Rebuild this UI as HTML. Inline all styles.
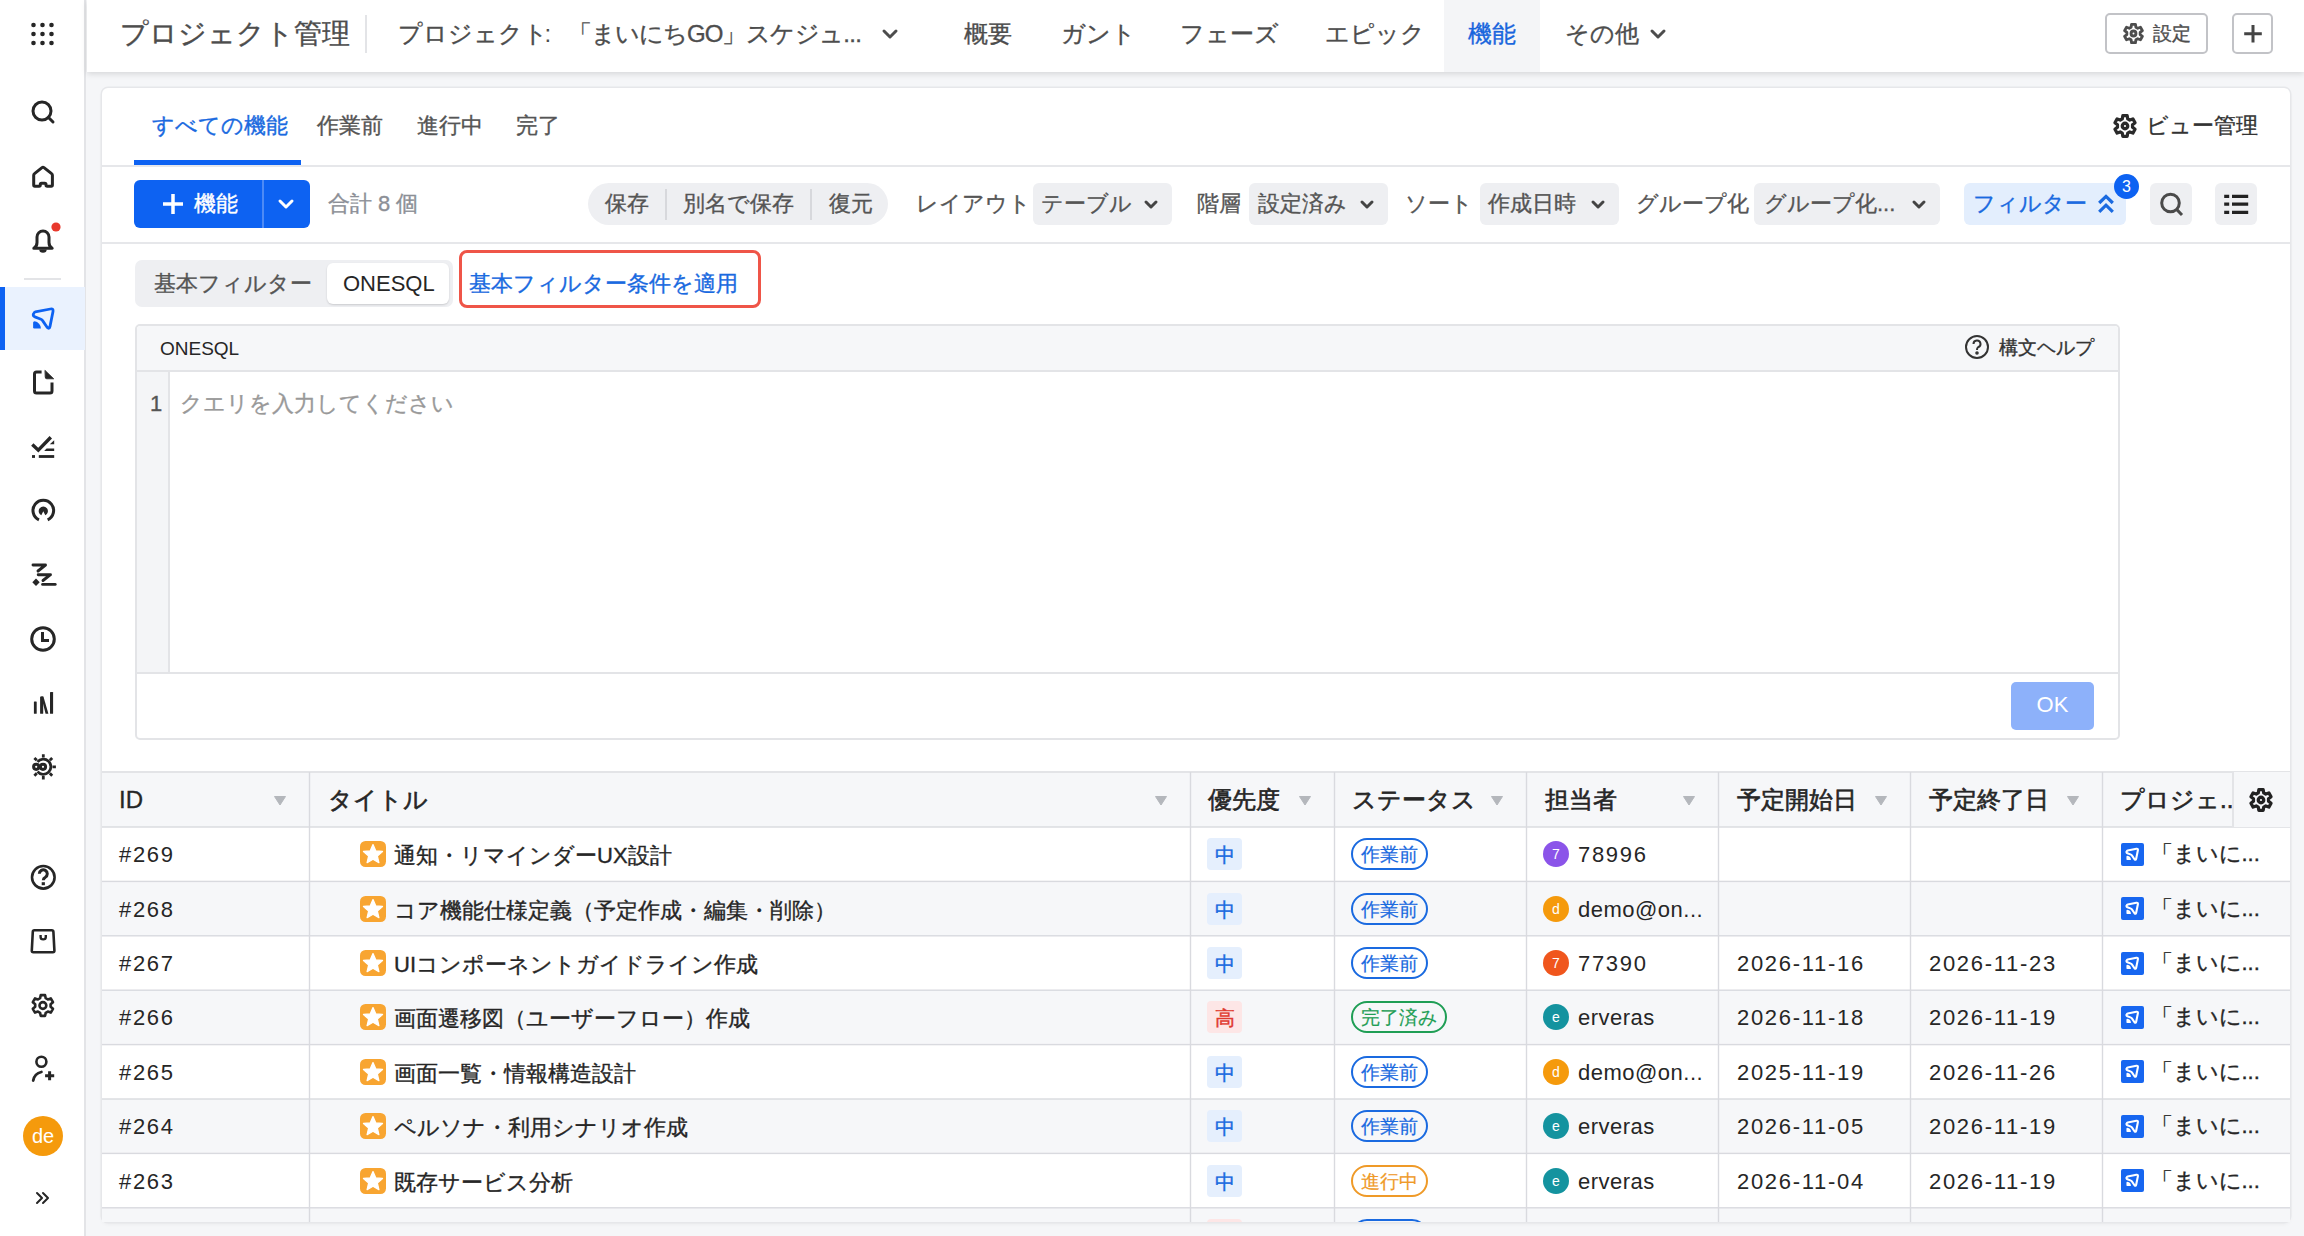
<!DOCTYPE html>
<html lang="ja">
<head>
<meta charset="utf-8">
<style>
*{box-sizing:border-box;margin:0;padding:0}
html,body{width:2304px;height:1236px;overflow:hidden}
body{-webkit-text-stroke:0.35px currentColor;font-family:"Liberation Sans",sans-serif;background:#f5f6f8;color:#262626;position:relative}
.a{position:absolute}
.t{position:absolute;white-space:nowrap;line-height:1}
.sel{position:absolute;top:183px;height:42px;background:#eeeff2;border-radius:6px}
svg{position:absolute;overflow:visible}
.th{font-size:24px;color:#262626;-webkit-text-stroke:0.6px #262626}
.td{font-size:22px;color:#262626}
.num{letter-spacing:1.7px}
.lat{-webkit-text-stroke:0}
.nm{letter-spacing:0.5px}
.star{width:26px;height:26px;background:#f8a531;border-radius:5px}
.pri{-webkit-text-stroke:0.4px currentColor;width:35px;height:32px;border-radius:4px;font-size:20px;line-height:34px;text-align:center}
.pill{-webkit-text-stroke:0.2px currentColor;height:32px;border:2px solid;border-radius:16px;font-size:19px;line-height:30px;text-align:center;background:transparent}
.av{-webkit-text-stroke:0;width:26px;height:26px;border-radius:50%;color:#fff;font-size:14px;line-height:26px;text-align:center}

</style>
</head>
<body>
<svg width="0" height="0" style="left:0;top:0;position:absolute">
<defs>
<symbol id="gear" viewBox="0 0 26 26"><path d="M15.72 5.90L15.20 2.63L10.80 2.63L10.28 5.90L8.22 7.09L5.12 5.91L2.92 9.72L5.49 11.81L5.49 14.19L2.92 16.28L5.12 20.09L8.22 18.91L10.28 20.10L10.80 23.37L15.20 23.37L15.72 20.10L17.78 18.91L20.88 20.09L23.08 16.28L20.51 14.19L20.51 11.81L23.08 9.72L20.88 5.91L17.78 7.09Z" fill="none" stroke="currentColor" stroke-width="3.2" stroke-linejoin="round"/><path d="M13 8.6A4.4 4.4 0 1 1 13 17.4A4.4 4.4 0 1 1 13 8.6ZM13 11.9A1.1 1.1 0 1 0 13 14.1A1.1 1.1 0 1 0 13 11.9Z" fill="currentColor" fill-rule="evenodd"/></symbol>
<symbol id="plane" viewBox="31 306 26 26" overflow="visible"><path d="M35.3 311.9L50.4 309.0Q53.6 308.4 53.0 311.6L50.0 326.4Q49.3 329.6 47.1 327.2L42.6 320.6Q42 319.6 40.9 319.2L34.9 316.9Q32.5 316 33.5 313.9Q34.2 312.1 35.3 311.9Z" fill="none" stroke="currentColor" style="stroke-width:var(--sw,2.8)" stroke-linejoin="round"/><path d="M33.1 322.8Q33.1 321.3 34.6 321.3A7.2 7.2 0 0 1 40.9 328.4H34.3Q33.1 328.4 33.1 327.2Z" fill="currentColor"/></symbol>
</defs></svg>

<!-- ============ SIDEBAR ============ -->
<div class="a" style="left:0;top:0;width:86px;height:1236px;background:#fff;border-right:2px solid #e3e4e7"></div>
<div class="a" style="left:0;top:287px;width:85px;height:63px;background:#eaf2fe"></div>
<div class="a" style="left:0;top:287px;width:5px;height:63px;background:#0d62f2"></div>
<div class="a" style="left:24px;top:278px;width:37px;height:2px;background:#e3e4e7"></div>
<svg width="86" height="1236" style="left:0;top:0" fill="none" stroke="#262626" stroke-width="3" stroke-linecap="round" stroke-linejoin="round">
  <!-- grid dots -->
  <g fill="#262626" stroke="none">
    <circle cx="33.5" cy="25" r="2.3"/><circle cx="42.5" cy="25" r="2.3"/><circle cx="51.5" cy="25" r="2.3"/>
    <circle cx="33.5" cy="34" r="2.3"/><circle cx="42.5" cy="34" r="2.3"/><circle cx="51.5" cy="34" r="2.3"/>
    <circle cx="33.5" cy="43" r="2.3"/><circle cx="42.5" cy="43" r="2.3"/><circle cx="51.5" cy="43" r="2.3"/>
  </g>
  <!-- search -->
  <circle cx="42" cy="111" r="9"/><line x1="48.5" y1="117.5" x2="53" y2="122"/>
  <!-- home -->
  <path d="M33.7 185V175.2Q33.7 174.2 34.5 173.6L42 167.6Q43 166.8 44 167.6L51.6 173.6Q52.4 174.2 52.4 175.2V185Q52.4 186.2 51.2 186.2H47.2Q46 186.2 46 185V184.4Q46 183.2 44.8 183.2H41.5Q40.3 183.2 40.3 184.4V185Q40.3 186.2 39.1 186.2H34.9Q33.7 186.2 33.7 185Z" stroke-width="3"/>
  <!-- bell -->
  <path d="M33.8 248.3Q37 246.5 37 242.5V237A6 6 0 0 1 49 237V242.5Q49 246.5 52.2 248.3Z" stroke-width="3"/><path d="M39.3 249.5A3.7 3.2 0 0 0 46.7 249.5Z" fill="#262626" stroke="none"/>
  <circle cx="56" cy="227" r="4.6" fill="#e8392d" stroke="none"/>
  <!-- feature (active) -->
  <use href="#plane" x="31" y="306" width="26" height="26" color="#0d62f2" stroke="none"/>
  <!-- doc -->
  <path d="M41.6 372H36.5Q34.5 372 34.5 374V391Q34.5 393 36.5 393H50Q52 393 52 391V382.6" stroke-width="3" stroke-linecap="butt" stroke-linejoin="round"/>
  <path d="M45.2 370.6L53.7 378.8H46.8Q45.2 378.8 45.2 377.2Z" fill="#262626" stroke="#262626" stroke-width="0.8" stroke-linejoin="round"/>
  <!-- checklist -->
  <path d="M32.3 444.6L38.3 450.2L50.8 437.3" stroke-width="3.4" stroke-linecap="butt" stroke-linejoin="miter"/>
  <g fill="#262626" stroke="none"><path d="M49.8 444.2H54.2V440.2Z"/><path d="M44.2 451.1L46.6 448.4H54.2V451.1Z"/><rect x="38.8" y="455.1" width="15.4" height="2.8"/><rect x="32" y="455.1" width="3" height="2.8"/></g>
  <!-- radar -->
  <path d="M38.95 519.8A10.3 10.3 0 1 1 47.65 519.8" stroke-width="3" stroke-linecap="butt"/>
  <path d="M43.3 511.2L41.3 515.3A4.6 4.6 0 1 1 45.3 515.3Z" fill="#262626" stroke="none"/>
  <!-- z list -->
  <path d="M33 565H45.5L38 571M38.2 574.7H50.5L43 580.5" stroke-width="2.9" stroke-linecap="round" stroke-linejoin="round"/>
  <path d="M42.6 584.4H55.2" stroke-width="2.9"/>
  <path d="M36 578.6L39.7 582.3L36 586L32.3 582.3Z" fill="#262626" stroke="none" />
  <!-- clock -->
  <circle cx="43" cy="639" r="11.3" stroke-width="3"/><path d="M42.5 632V640.5H49" stroke-width="3" stroke-linecap="butt" stroke-linejoin="miter"/>
  <!-- chart -->
  <g fill="#262626" stroke="none"><rect x="33.9" y="701.4" width="2.8" height="12.4" rx="0.6"/><rect x="40.1" y="696.5" width="3.1" height="17.3" rx="0.6"/><path d="M41.2 696.5H43.4L48.4 713.8H45.6Z"/><rect x="50" y="692" width="3.1" height="21.8" rx="0.6"/></g>
  <!-- bug -->
  <path d="M37.48 761.91A7.6 7.6 0 1 1 37.48 771.69" stroke-width="2.8" stroke-linecap="butt"/>
  <path d="M43.30 757.60L43.30 754.20M49.81 760.29L52.21 757.89M52.50 766.80L55.90 766.80M49.81 773.31L52.21 775.71M43.30 776.00L43.30 779.40M36.79 760.29L34.39 757.89M36.79 773.31L34.39 775.71" stroke-width="2.8" stroke-linecap="butt"/>
  <circle cx="36.2" cy="766.8" r="2.6" stroke-width="3"/><circle cx="43" cy="766.8" r="2.6" stroke-width="3"/>
  <!-- help -->
  <circle cx="43.3" cy="877.3" r="11.3" stroke-width="2.6"/>
  <path d="M39.3 873.8A4 4 0 1 1 45.3 877.3Q43.3 878.3 43.3 880.3" stroke-width="3" stroke-linecap="butt"/><rect x="41.7" y="882.2" width="3.2" height="3" fill="#262626" stroke="none"/>
  <!-- bag -->
  <path d="M34.3 930.3H51.8Q53.3 930.3 53.4 931.8L54.4 950.6Q54.5 952.2 52.9 952.2H33.3Q31.7 952.2 31.8 950.6L32.8 931.8Q32.9 930.3 34.3 930.3Z" stroke-width="2.6"/>
  <path d="M40.6 935V937Q40.6 939.4 43.2 939.4Q45.8 939.4 45.8 937V935" stroke-width="2.4" stroke-linecap="butt"/>
  <!-- gear -->
  <path d="M45.70 998.22L45.10 995.13L40.70 995.13L40.10 998.22L37.99 999.44L35.02 998.41L32.82 1002.22L35.20 1004.28L35.20 1006.72L32.82 1008.78L35.02 1012.59L37.99 1011.56L40.10 1012.78L40.70 1015.87L45.10 1015.87L45.70 1012.78L47.81 1011.56L50.78 1012.59L52.98 1008.78L50.60 1006.72L50.60 1004.28L52.98 1002.22L50.78 998.41L47.81 999.44Z" stroke-width="2.6"/>
  <circle cx="42.9" cy="1005.5" r="3.4" stroke-width="2.6"/>
  <!-- add user -->
  <circle cx="41.4" cy="1061.7" r="5" stroke-width="2.6"/><path d="M33.2 1080.5Q34.5 1073.5 41.4 1072" stroke-width="2.8"/><path d="M45.1 1075.7H54.2M49.6 1071.2V1080.2" stroke-width="3" stroke-linecap="butt"/>
  <!-- chevrons >> -->
  <path d="M37 1193L42 1198L37 1203M43 1193L48 1198L43 1203" stroke-width="2"/>
</svg>
<div class="a" style="left:23px;top:1116px;width:40px;height:40px;border-radius:50%;background:#f59a0c"></div>
<div class="t lat" style="left:23px;top:1126px;width:40px;text-align:center;font-size:20px;color:#fff">de</div>

<!-- ============ HEADER ============ -->
<div class="a" style="left:87px;top:0;width:2217px;height:72px;background:#fff;box-shadow:0 2px 6px rgba(0,0,0,.13)"></div>
<div class="a" style="left:1444px;top:0;width:96px;height:72px;background:#f4f5f7"></div>
<div class="t" style="left:120px;top:20px;font-size:28px;color:#4d4d4d">プロジェクト管理</div>
<div class="a" style="left:365px;top:15px;width:2px;height:38px;background:#e3e4e7"></div>
<div class="t" style="left:398px;top:22px;font-size:24px;color:#4d4d4d">プロジェクト</div>
<div class="t lat" style="left:544.5px;top:22px;font-size:24px;color:#4d4d4d">:</div>
<div class="t" style="left:568px;top:22px;font-size:24px;color:#4d4d4d;letter-spacing:-1px">「まいにちGO」</div>
<div class="t" style="left:746px;top:22px;font-size:24px;color:#4d4d4d;letter-spacing:-0.7px">スケジュ...</div>
<svg width="20" height="20" style="left:880px;top:24px" fill="none" stroke="#4d4d4d" stroke-width="3" stroke-linecap="round" stroke-linejoin="round"><path d="M4 7L10 13L16 7"/></svg>
<div class="t" style="left:964px;top:22px;font-size:24px;color:#4d4d4d">概要</div>
<div class="t" style="left:1061px;top:22px;font-size:24px;color:#4d4d4d">ガント</div>
<div class="t" style="left:1180px;top:22px;font-size:24px;color:#4d4d4d">フェーズ</div>
<div class="t" style="left:1325px;top:22px;font-size:24px;color:#4d4d4d">エピック</div>
<div class="t" style="left:1468px;top:22px;font-size:24px;color:#1865dd">機能</div>
<div class="t" style="left:1565px;top:22px;font-size:24px;color:#4d4d4d">その他</div>
<svg width="20" height="20" style="left:1648px;top:24px" fill="none" stroke="#4d4d4d" stroke-width="3" stroke-linecap="round" stroke-linejoin="round"><path d="M4 7L10 13L16 7"/></svg>
<div class="a" style="left:2105px;top:13px;width:103px;height:41px;border:2px solid #c2c3c7;border-radius:5px;background:#fff"></div>
<svg width="23" height="23" style="left:2121.5px;top:21.5px"><use href="#gear" color="#4d4d4d"/></svg>
<div class="t" style="left:2153px;top:24px;font-size:19px;color:#4d4d4d">設定</div>
<div class="a" style="left:2232px;top:13px;width:41px;height:41px;border:2px solid #c2c3c7;border-radius:5px;background:#fff"></div>
<svg width="24" height="24" style="left:2241px;top:22px" fill="none" stroke="#444" stroke-width="3"><path d="M12 3V20.5M3.2 11.8H20.8"/></svg>

<!-- ============ CARD ============ -->
<div class="a" style="left:102px;top:88px;width:2188px;height:1134px;background:#fff;border-radius:6px;box-shadow:0 0 0 1.5px #e6e7ea,0 2px 4px rgba(0,0,0,.05)"></div>

<!-- tabs -->
<div class="t" style="left:152px;top:115px;font-size:22px;color:#1a6ae0">すべての機能</div>
<div class="t" style="left:317px;top:115px;font-size:22px;color:#555">作業前</div>
<div class="t" style="left:417px;top:115px;font-size:22px;color:#555">進行中</div>
<div class="t" style="left:516px;top:115px;font-size:22px;color:#555">完了</div>
<div class="a" style="left:134px;top:160px;width:167px;height:5px;background:#0d62f2"></div>
<div class="a" style="left:102px;top:165px;width:2188px;height:2px;background:#e6e7ea"></div>
<svg width="26" height="26" style="left:2111.5px;top:113px"><use href="#gear" color="#2a2a2a"/></svg>
<div class="t" style="left:2146px;top:115px;font-size:22px;color:#333">ビュー管理</div>

<!-- toolbar -->
<div class="a" style="left:134px;top:180px;width:176px;height:48px;background:#0d62f2;border-radius:6px"></div>
<div class="a" style="left:262px;top:180px;width:1.5px;height:48px;background:#4d8af5"></div>
<svg width="24" height="24" style="left:161px;top:192px" fill="none" stroke="#fff" stroke-width="3.5"><path d="M12 2V22M2 12H22"/></svg>
<div class="t" style="left:194px;top:193px;font-size:22px;color:#fff">機能</div>
<svg width="20" height="20" style="left:276px;top:194px" fill="none" stroke="#fff" stroke-width="3" stroke-linecap="round" stroke-linejoin="round"><path d="M4 7L10 13L16 7"/></svg>
<div class="t" style="left:328px;top:193px;font-size:22px;color:#8c8f96">合計 8 個</div>

<div class="a" style="left:588px;top:183px;width:300px;height:42px;background:#eeeff2;border-radius:21px"></div>
<div class="a" style="left:665px;top:189px;width:2px;height:31px;background:#d7d8dc"></div>
<div class="a" style="left:810px;top:189px;width:2px;height:31px;background:#d7d8dc"></div>
<div class="t" style="left:605px;top:193px;font-size:22px;color:#555">保存</div>
<div class="t" style="left:683px;top:193px;font-size:22px;color:#555">別名で保存</div>
<div class="t" style="left:829px;top:193px;font-size:22px;color:#555">復元</div>

<div class="t" style="left:916px;top:193px;font-size:22px;color:#555">レイアウト</div>
<div class="sel" style="left:1033px;width:139px"></div>
<div class="t" style="left:1041px;top:193px;font-size:22px;color:#555">テーブル</div>
<svg width="16" height="16" style="left:1143px;top:196px" fill="none" stroke="#444" stroke-width="3" stroke-linecap="round" stroke-linejoin="round"><path d="M3 6L8 11L13 6"/></svg>

<div class="t" style="left:1197px;top:193px;font-size:22px;color:#555">階層</div>
<div class="sel" style="left:1249px;width:139px"></div>
<div class="t" style="left:1258px;top:193px;font-size:22px;color:#555">設定済み</div>
<svg width="16" height="16" style="left:1359px;top:196px" fill="none" stroke="#444" stroke-width="3" stroke-linecap="round" stroke-linejoin="round"><path d="M3 6L8 11L13 6"/></svg>

<div class="t" style="left:1405px;top:193px;font-size:22px;color:#555">ソート</div>
<div class="sel" style="left:1480px;width:139px"></div>
<div class="t" style="left:1488px;top:193px;font-size:22px;color:#555">作成日時</div>
<svg width="16" height="16" style="left:1590px;top:196px" fill="none" stroke="#444" stroke-width="3" stroke-linecap="round" stroke-linejoin="round"><path d="M3 6L8 11L13 6"/></svg>

<div class="t" style="left:1636px;top:193px;font-size:22px;color:#555">グループ化</div>
<div class="sel" style="left:1754px;width:186px"></div>
<div class="t" style="left:1764px;top:193px;font-size:22px;color:#555">グループ化...</div>
<svg width="16" height="16" style="left:1911px;top:196px" fill="none" stroke="#444" stroke-width="3" stroke-linecap="round" stroke-linejoin="round"><path d="M3 6L8 11L13 6"/></svg>

<div class="a" style="left:1964px;top:183px;width:162px;height:42px;background:#e3eefd;border-radius:6px"></div>
<div class="t" style="left:1973px;top:193px;font-size:22px;color:#1a6ae0">フィルター</div>
<svg width="20" height="22" style="left:2095.5px;top:193px" fill="none" stroke="#1a6ae0" stroke-width="3.2" stroke-linecap="butt" stroke-linejoin="miter"><path d="M3.2 10L10 3.4L16.8 10M3.2 18.8L10 12.2L16.8 18.8"/></svg>
<div class="a" style="left:2114px;top:174px;width:25px;height:25px;border-radius:50%;background:#0d62f2"></div>
<div class="t lat" style="left:2114px;top:179px;width:25px;text-align:center;font-size:16px;color:#fff">3</div>

<div class="a" style="left:2150px;top:183px;width:42px;height:42px;background:#eeeff2;border-radius:6px"></div>
<svg width="42" height="42" style="left:2150px;top:183px" fill="none" stroke="#4a4a4a" stroke-width="3"><circle cx="20.5" cy="20" r="8.8"/><path d="M26.6 26.4L32 32"/></svg>
<div class="a" style="left:2215px;top:183px;width:42px;height:42px;background:#eeeff2;border-radius:6px"></div>
<svg width="42" height="42" style="left:2215px;top:183px" fill="none" stroke="#222" stroke-width="3.2"><path d="M9.2 13.3H14.2M9.2 21.2H14.2M9.2 29.3H14.2M17 13.3H33.2M17 21.2H33.2M17 29.3H33.2"/></svg>

<div class="a" style="left:102px;top:242px;width:2188px;height:2px;background:#e6e7ea"></div>

<!-- filter mode -->
<div class="a" style="left:135px;top:260px;width:318px;height:47px;background:#eeeff2;border-radius:7px"></div>
<div class="a" style="left:327px;top:263px;width:122px;height:41px;background:#fff;border-radius:6px;box-shadow:0 1px 2px rgba(0,0,0,.15)"></div>
<div class="t" style="left:154px;top:273px;font-size:22px;color:#555">基本フィルター</div>
<div class="t lat" style="left:343px;top:273px;font-size:22px;color:#262626">ONESQL</div>
<div class="a" style="left:458.5px;top:250px;width:302.5px;height:57.5px;border:3.6px solid #ef5548;border-radius:8px"></div>
<div class="t" style="left:469px;top:273px;font-size:22px;color:#1a6ae0">基本フィルター条件を適用</div>

<!-- editor -->
<div class="a" style="left:135px;top:324px;width:1985px;height:416px;background:#fff;border:2px solid #e3e4e7;border-radius:5px"></div>
<div class="a" style="left:137px;top:326px;width:1981px;height:45px;background:#f6f7f9;border-radius:4px 4px 0 0"></div>
<div class="a" style="left:137px;top:370px;width:1981px;height:2px;background:#e3e4e7"></div>
<div class="t lat" style="left:160px;top:339px;font-size:19px;color:#262626">ONESQL</div>
<svg width="26" height="26" style="left:1964px;top:334px" fill="none" stroke="#333" stroke-width="2"><circle cx="13" cy="13" r="11"/><path d="M9.5 10A3.5 3.5 0 1 1 14 13.3Q13 14 13 16"/><circle cx="13" cy="19" r=".8" fill="#333"/></svg>
<div class="t" style="left:1999px;top:338px;font-size:19px;color:#333">構文ヘルプ</div>
<div class="a" style="left:137px;top:372px;width:33px;height:301px;background:#f4f5f7;border-right:2px solid #e3e4e7"></div>
<div class="t" style="left:150px;top:393px;font-size:22px;color:#555">1</div>
<div class="t" style="left:180px;top:393px;font-size:22px;color:#999">クエリを入力してください</div>
<div class="a" style="left:137px;top:672px;width:1981px;height:2px;background:#e3e4e7"></div>
<div class="a" style="left:2011px;top:682px;width:83px;height:48px;background:#8db1fa;border-radius:5px"></div>
<div class="t lat" style="left:2011px;top:694px;width:83px;text-align:center;font-size:22px;color:#fff">OK</div>

<!-- table -->
<div class="a" style="left:0;top:0;width:2304px;height:1222px;overflow:hidden">
<div class="a" style="left:102px;top:772px;width:2188px;height:55px;background:#f6f7f9"></div>
<div class="a" style="left:102px;top:827.0px;width:2188px;height:54.4px;background:#fff"></div>
<div class="a" style="left:102px;top:881.4px;width:2188px;height:54.4px;background:#f6f7f9"></div>
<div class="a" style="left:102px;top:935.8px;width:2188px;height:54.4px;background:#fff"></div>
<div class="a" style="left:102px;top:990.2px;width:2188px;height:54.4px;background:#f6f7f9"></div>
<div class="a" style="left:102px;top:1044.6px;width:2188px;height:54.4px;background:#fff"></div>
<div class="a" style="left:102px;top:1099.0px;width:2188px;height:54.4px;background:#f6f7f9"></div>
<div class="a" style="left:102px;top:1153.4px;width:2188px;height:54.4px;background:#fff"></div>
<div class="a" style="left:102px;top:1207.8px;width:2188px;height:14.2px;background:#f6f7f9"></div>
<div class="a" style="left:102px;top:771px;width:2188px;height:2px;background:#e3e4e7"></div>
<svg width="2304" height="1236" style="left:0;top:0"><g fill="#d9dadf"><rect x="102" y="826.30" width="2188" height="1.4"/><rect x="102" y="880.70" width="2188" height="1.4"/><rect x="102" y="935.10" width="2188" height="1.4"/><rect x="102" y="989.50" width="2188" height="1.4"/><rect x="102" y="1043.90" width="2188" height="1.4"/><rect x="102" y="1098.30" width="2188" height="1.4"/><rect x="102" y="1152.70" width="2188" height="1.4"/><rect x="102" y="1207.10" width="2188" height="1.4"/><rect x="308.80" y="772" width="1.4" height="450"/><rect x="1189.80" y="772" width="1.4" height="450"/><rect x="1333.80" y="772" width="1.4" height="450"/><rect x="1525.80" y="772" width="1.4" height="450"/><rect x="1717.80" y="772" width="1.4" height="450"/><rect x="1909.80" y="772" width="1.4" height="450"/><rect x="2101.80" y="772" width="1.4" height="450"/></g></svg>
<div class="t th" style="left:119px;top:788px;-webkit-text-stroke:0.3px #262626">ID</div>
<div class="t th" style="left:328px;top:788px">タイトル</div>
<div class="t th" style="left:1208px;top:788px">優先度</div>
<div class="t th" style="left:1352px;top:788px">ステータス</div>
<div class="t th" style="left:1545px;top:788px">担当者</div>
<div class="t th" style="left:1737px;top:788px">予定開始日</div>
<div class="t th" style="left:1929px;top:788px">予定終了日</div>
<svg width="12" height="10" style="left:274.0px;top:796px"><path d="M0.5 0.5H11.5L6 9Z" fill="#b4b7bc" stroke="#b4b7bc" stroke-width="1" stroke-linejoin="round"/></svg>
<svg width="12" height="10" style="left:1155.0px;top:796px"><path d="M0.5 0.5H11.5L6 9Z" fill="#b4b7bc" stroke="#b4b7bc" stroke-width="1" stroke-linejoin="round"/></svg>
<svg width="12" height="10" style="left:1299.0px;top:796px"><path d="M0.5 0.5H11.5L6 9Z" fill="#b4b7bc" stroke="#b4b7bc" stroke-width="1" stroke-linejoin="round"/></svg>
<svg width="12" height="10" style="left:1491.0px;top:796px"><path d="M0.5 0.5H11.5L6 9Z" fill="#b4b7bc" stroke="#b4b7bc" stroke-width="1" stroke-linejoin="round"/></svg>
<svg width="12" height="10" style="left:1683.0px;top:796px"><path d="M0.5 0.5H11.5L6 9Z" fill="#b4b7bc" stroke="#b4b7bc" stroke-width="1" stroke-linejoin="round"/></svg>
<svg width="12" height="10" style="left:1875.0px;top:796px"><path d="M0.5 0.5H11.5L6 9Z" fill="#b4b7bc" stroke="#b4b7bc" stroke-width="1" stroke-linejoin="round"/></svg>
<svg width="12" height="10" style="left:2067.0px;top:796px"><path d="M0.5 0.5H11.5L6 9Z" fill="#b4b7bc" stroke="#b4b7bc" stroke-width="1" stroke-linejoin="round"/></svg>
<div class="t th" style="left:2120px;top:788px">プロジェ...</div>
<div class="a" style="left:2232px;top:772px;width:58px;height:55px;background:#f6f7f9;border-left:2px solid #e3e4e7"></div>
<svg width="26" height="26" style="left:2248px;top:787px"><use href="#gear" color="#222"/></svg>
<div class="t td num lat" style="left:119px;top:844.2px">#269</div>
<svg width="26" height="26" style="left:360px;top:841.2px"><rect width="26" height="26" rx="5.5" fill="#f8a531"/><path d="M13.00 3.60L10.30 9.88L3.49 10.51L8.63 15.02L7.12 21.69L13.00 18.20L18.88 21.69L17.37 15.02L22.51 10.51L15.70 9.88Z" fill="#fff" stroke="#fff" stroke-width="1.3" stroke-linejoin="round"/></svg>
<div class="t td" style="left:394px;top:845.2px">通知・リマインダーUX設計</div>
<div class="a pri" style="left:1207px;top:838.2px;background:#e5effd;color:#1a6ae0">中</div>
<div class="a pill" style="left:1351px;top:838.2px;width:77px;border-color:#1a6ae0;color:#1a6ae0">作業前</div>
<div class="a av" style="left:1543px;top:841.2px;background:#8b54e9">7</div>
<div class="t td num lat" style="left:1578px;top:844.2px">78996</div>
<svg width="23" height="23" style="left:2121px;top:842.7px"><rect width="23" height="23" rx="2" fill="#1766f0"/><use href="#plane" x="4.2" y="4" width="15" height="15" color="#fff" style="--sw:3.6"/></svg>
<div class="t td" style="left:2150.5px;top:843.2px">「まいに...</div>
<div class="t td num lat" style="left:119px;top:898.6px">#268</div>
<svg width="26" height="26" style="left:360px;top:895.6px"><rect width="26" height="26" rx="5.5" fill="#f8a531"/><path d="M13.00 3.60L10.30 9.88L3.49 10.51L8.63 15.02L7.12 21.69L13.00 18.20L18.88 21.69L17.37 15.02L22.51 10.51L15.70 9.88Z" fill="#fff" stroke="#fff" stroke-width="1.3" stroke-linejoin="round"/></svg>
<div class="t td" style="left:394px;top:899.6px">コア機能仕様定義（予定作成・編集・削除）</div>
<div class="a pri" style="left:1207px;top:892.6px;background:#e5effd;color:#1a6ae0">中</div>
<div class="a pill" style="left:1351px;top:892.6px;width:77px;border-color:#1a6ae0;color:#1a6ae0">作業前</div>
<div class="a av" style="left:1543px;top:895.6px;background:#f59a0c">d</div>
<div class="t td nm lat" style="left:1578px;top:898.6px">demo@on...</div>
<svg width="23" height="23" style="left:2121px;top:897.1px"><rect width="23" height="23" rx="2" fill="#1766f0"/><use href="#plane" x="4.2" y="4" width="15" height="15" color="#fff" style="--sw:3.6"/></svg>
<div class="t td" style="left:2150.5px;top:897.6px">「まいに...</div>
<div class="t td num lat" style="left:119px;top:953.0px">#267</div>
<svg width="26" height="26" style="left:360px;top:950.0px"><rect width="26" height="26" rx="5.5" fill="#f8a531"/><path d="M13.00 3.60L10.30 9.88L3.49 10.51L8.63 15.02L7.12 21.69L13.00 18.20L18.88 21.69L17.37 15.02L22.51 10.51L15.70 9.88Z" fill="#fff" stroke="#fff" stroke-width="1.3" stroke-linejoin="round"/></svg>
<div class="t td" style="left:394px;top:954.0px">UIコンポーネントガイドライン作成</div>
<div class="a pri" style="left:1207px;top:947.0px;background:#e5effd;color:#1a6ae0">中</div>
<div class="a pill" style="left:1351px;top:947.0px;width:77px;border-color:#1a6ae0;color:#1a6ae0">作業前</div>
<div class="a av" style="left:1543px;top:950.0px;background:#f0561d">7</div>
<div class="t td num lat" style="left:1578px;top:953.0px">77390</div>
<div class="t td num lat" style="left:1737px;top:953.0px">2026-11-16</div>
<div class="t td num lat" style="left:1929px;top:953.0px">2026-11-23</div>
<svg width="23" height="23" style="left:2121px;top:951.5px"><rect width="23" height="23" rx="2" fill="#1766f0"/><use href="#plane" x="4.2" y="4" width="15" height="15" color="#fff" style="--sw:3.6"/></svg>
<div class="t td" style="left:2150.5px;top:952.0px">「まいに...</div>
<div class="t td num lat" style="left:119px;top:1007.4px">#266</div>
<svg width="26" height="26" style="left:360px;top:1004.4px"><rect width="26" height="26" rx="5.5" fill="#f8a531"/><path d="M13.00 3.60L10.30 9.88L3.49 10.51L8.63 15.02L7.12 21.69L13.00 18.20L18.88 21.69L17.37 15.02L22.51 10.51L15.70 9.88Z" fill="#fff" stroke="#fff" stroke-width="1.3" stroke-linejoin="round"/></svg>
<div class="t td" style="left:394px;top:1008.4px">画面遷移図（ユーザーフロー）作成</div>
<div class="a pri" style="left:1207px;top:1001.4px;background:#fde6e6;color:#e0392e">高</div>
<div class="a pill" style="left:1351px;top:1001.4px;width:96px;border-color:#1f9e55;color:#1f9e55">完了済み</div>
<div class="a av" style="left:1543px;top:1004.4px;background:#14939f">e</div>
<div class="t td nm lat" style="left:1578px;top:1007.4px">erveras</div>
<div class="t td num lat" style="left:1737px;top:1007.4px">2026-11-18</div>
<div class="t td num lat" style="left:1929px;top:1007.4px">2026-11-19</div>
<svg width="23" height="23" style="left:2121px;top:1005.9px"><rect width="23" height="23" rx="2" fill="#1766f0"/><use href="#plane" x="4.2" y="4" width="15" height="15" color="#fff" style="--sw:3.6"/></svg>
<div class="t td" style="left:2150.5px;top:1006.4px">「まいに...</div>
<div class="t td num lat" style="left:119px;top:1061.8px">#265</div>
<svg width="26" height="26" style="left:360px;top:1058.8px"><rect width="26" height="26" rx="5.5" fill="#f8a531"/><path d="M13.00 3.60L10.30 9.88L3.49 10.51L8.63 15.02L7.12 21.69L13.00 18.20L18.88 21.69L17.37 15.02L22.51 10.51L15.70 9.88Z" fill="#fff" stroke="#fff" stroke-width="1.3" stroke-linejoin="round"/></svg>
<div class="t td" style="left:394px;top:1062.8px">画面一覧・情報構造設計</div>
<div class="a pri" style="left:1207px;top:1055.8px;background:#e5effd;color:#1a6ae0">中</div>
<div class="a pill" style="left:1351px;top:1055.8px;width:77px;border-color:#1a6ae0;color:#1a6ae0">作業前</div>
<div class="a av" style="left:1543px;top:1058.8px;background:#f59a0c">d</div>
<div class="t td nm lat" style="left:1578px;top:1061.8px">demo@on...</div>
<div class="t td num lat" style="left:1737px;top:1061.8px">2025-11-19</div>
<div class="t td num lat" style="left:1929px;top:1061.8px">2026-11-26</div>
<svg width="23" height="23" style="left:2121px;top:1060.3px"><rect width="23" height="23" rx="2" fill="#1766f0"/><use href="#plane" x="4.2" y="4" width="15" height="15" color="#fff" style="--sw:3.6"/></svg>
<div class="t td" style="left:2150.5px;top:1060.8px">「まいに...</div>
<div class="t td num lat" style="left:119px;top:1116.2px">#264</div>
<svg width="26" height="26" style="left:360px;top:1113.2px"><rect width="26" height="26" rx="5.5" fill="#f8a531"/><path d="M13.00 3.60L10.30 9.88L3.49 10.51L8.63 15.02L7.12 21.69L13.00 18.20L18.88 21.69L17.37 15.02L22.51 10.51L15.70 9.88Z" fill="#fff" stroke="#fff" stroke-width="1.3" stroke-linejoin="round"/></svg>
<div class="t td" style="left:394px;top:1117.2px">ペルソナ・利用シナリオ作成</div>
<div class="a pri" style="left:1207px;top:1110.2px;background:#e5effd;color:#1a6ae0">中</div>
<div class="a pill" style="left:1351px;top:1110.2px;width:77px;border-color:#1a6ae0;color:#1a6ae0">作業前</div>
<div class="a av" style="left:1543px;top:1113.2px;background:#14939f">e</div>
<div class="t td nm lat" style="left:1578px;top:1116.2px">erveras</div>
<div class="t td num lat" style="left:1737px;top:1116.2px">2026-11-05</div>
<div class="t td num lat" style="left:1929px;top:1116.2px">2026-11-19</div>
<svg width="23" height="23" style="left:2121px;top:1114.7px"><rect width="23" height="23" rx="2" fill="#1766f0"/><use href="#plane" x="4.2" y="4" width="15" height="15" color="#fff" style="--sw:3.6"/></svg>
<div class="t td" style="left:2150.5px;top:1115.2px">「まいに...</div>
<div class="t td num lat" style="left:119px;top:1170.6px">#263</div>
<svg width="26" height="26" style="left:360px;top:1167.6px"><rect width="26" height="26" rx="5.5" fill="#f8a531"/><path d="M13.00 3.60L10.30 9.88L3.49 10.51L8.63 15.02L7.12 21.69L13.00 18.20L18.88 21.69L17.37 15.02L22.51 10.51L15.70 9.88Z" fill="#fff" stroke="#fff" stroke-width="1.3" stroke-linejoin="round"/></svg>
<div class="t td" style="left:394px;top:1171.6px">既存サービス分析</div>
<div class="a pri" style="left:1207px;top:1164.6px;background:#e5effd;color:#1a6ae0">中</div>
<div class="a pill" style="left:1351px;top:1164.6px;width:77px;border-color:#ef9a28;color:#ef9a28">進行中</div>
<div class="a av" style="left:1543px;top:1167.6px;background:#14939f">e</div>
<div class="t td nm lat" style="left:1578px;top:1170.6px">erveras</div>
<div class="t td num lat" style="left:1737px;top:1170.6px">2026-11-04</div>
<div class="t td num lat" style="left:1929px;top:1170.6px">2026-11-19</div>
<svg width="23" height="23" style="left:2121px;top:1169.1px"><rect width="23" height="23" rx="2" fill="#1766f0"/><use href="#plane" x="4.2" y="4" width="15" height="15" color="#fff" style="--sw:3.6"/></svg>
<div class="t td" style="left:2150.5px;top:1169.6px">「まいに...</div>
<div class="a pri" style="left:1207px;top:1219.0px;background:#fde6e6;color:#e0392e"></div>
<div class="a pill" style="left:1351px;top:1219.0px;width:77px;border-color:#1a6ae0"></div>
</div>
</body>
</html>
